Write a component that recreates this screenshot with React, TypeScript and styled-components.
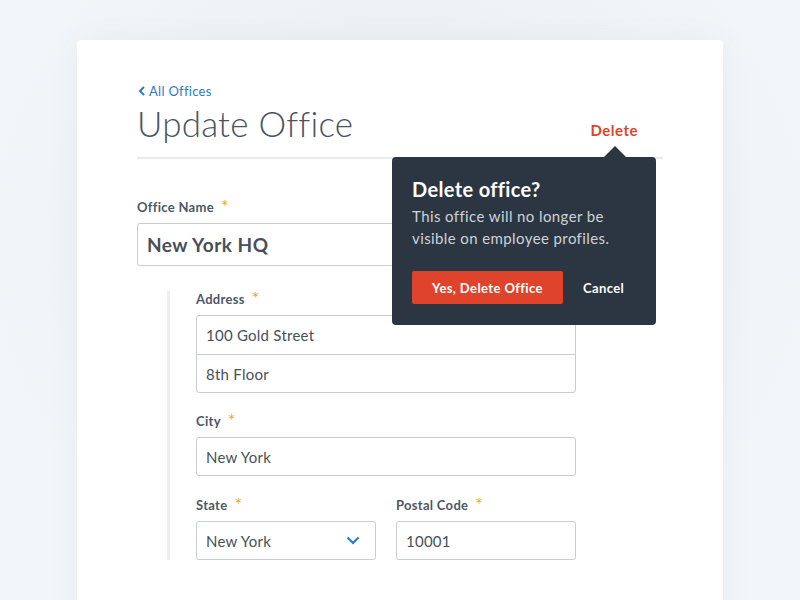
import React from 'react';
import styled, { createGlobalStyle } from 'styled-components';

const GlobalStyle = createGlobalStyle`
  html, body {
    margin: 0;
    padding: 0;
    height: 100%;
  }
  body {
    font-family: Lato, "Open Sans", sans-serif;
    background: #f2f5f8;
    overflow: hidden;
  }
`;

const Page = styled.div`
  width: 800px;
  height: 600px;
  overflow: hidden;
  background: radial-gradient(ellipse at 50% 40%, #e8ecf0 0%, #eef1f5 45%, #f3f6f9 75%);
  padding-top: 40px;
  box-sizing: border-box;
`;

const Card = styled.div`
  width: 646px;
  margin-left: 77px;
  height: 600px;
  background: #fff;
  border-radius: 4px;
  box-shadow: 0 0 30px rgba(60, 80, 100, 0.06);
  padding: 43px 60px 0;
  box-sizing: border-box;
`;

const Header = styled.div`
  position: relative;
  border-bottom: 2px solid #e8eaed;
  padding-bottom: 13px;
`;

const BackLink = styled.a`
  display: flex;
  align-items: center;
  gap: 3px;
  color: #2b7bc6;
  font-size: 13px;
  line-height: 16px;
  letter-spacing: 0.3px;
  text-decoration: none;
  margin-left: 1px;
`;

const TitleRow = styled.div`
  display: flex;
  align-items: flex-end;
  justify-content: space-between;
`;

const Title = styled.h1`
  margin: 3px 0 0;
  font-size: 35px;
  font-weight: 300;
  line-height: 42px;
  color: #4a5461;
  letter-spacing: 0.2px;
`;

const DeleteLink = styled.span`
  color: #e0432b;
  font-size: 15px;
  font-weight: 700;
  letter-spacing: 0.5px;
  margin-right: 25px;
  margin-bottom: 5px;
`;

const Popover = styled.div`
  position: absolute;
  left: 255px;
  top: 74px;
  width: 264px;
  box-sizing: border-box;
  background: #2c3643;
  border-radius: 4px;
  padding: 19px 20px 21px;
  color: #fff;
  z-index: 2;

  &::before {
    content: '';
    position: absolute;
    top: -11px;
    right: 30px;
    border-left: 11px solid transparent;
    border-right: 11px solid transparent;
    border-bottom: 11px solid #2c3643;
  }
`;

const PopTitle = styled.div`
  font-size: 20px;
  font-weight: 700;
  line-height: 26px;
  letter-spacing: 0.35px;
`;

const PopBody = styled.div`
  margin-top: 3px;
  font-size: 15px;
  line-height: 22px;
  letter-spacing: 0.4px;
  color: #cdd2d8;
`;

const PopActions = styled.div`
  display: flex;
  align-items: center;
  gap: 20px;
  margin-top: 22px;
`;

const DangerButton = styled.button`
  height: 33px;
  width: 151px;
  border: none;
  border-radius: 2px;
  background: #e0432b;
  color: #fff;
  font-family: inherit;
  font-size: 13px;
  font-weight: 700;
  letter-spacing: 0.4px;
`;

const TextButton = styled.button`
  border: none;
  background: none;
  color: #fff;
  font-family: inherit;
  font-size: 13px;
  font-weight: 700;
  letter-spacing: 0.4px;
  padding: 0;
`;

const Form = styled.div`
  width: 439px;
  padding-top: 40px;
`;

const Field = styled.div<{ $gap?: number }>`
  display: flex;
  flex-direction: column;
  margin-top: ${(p) => p.$gap ?? 0}px;
  flex: 1;
`;

const Label = styled.label`
  display: flex;
  align-items: flex-start;
  font-size: 13px;
  font-weight: 700;
  line-height: 16px;
  letter-spacing: 0.3px;
  color: #4d5765;
  margin-bottom: 8px;
`;

const Star = styled.span`
  color: #f5a623;
  font-size: 18px;
  font-weight: 400;
  line-height: 14px;
  margin-left: 7px;
`;

const Input = styled.div<{ $big?: boolean }>`
  display: flex;
  align-items: center;
  justify-content: space-between;
  height: ${(p) => (p.$big ? 43 : 39)}px;
  box-sizing: border-box;
  border: 1px solid #c9cdd1;
  border-radius: 3px;
  padding: 0 9px;
  font-size: ${(p) => (p.$big ? 19 : 15)}px;
  font-weight: ${(p) => (p.$big ? 700 : 400)};
  letter-spacing: ${(p) => (p.$big ? 0.5 : 0.25)}px;
  color: #474f5a;
`;

const InputStack = styled.div`
  border: 1px solid #c9cdd1;
  border-radius: 3px;
  display: flex;
  flex-direction: column;
`;

const StackRow = styled.div`
  height: 38px;
  display: flex;
  align-items: center;
  padding: 0 9px;
  font-size: 15px;
  letter-spacing: 0.25px;
  color: #474f5a;
  & + & {
    height: 37px;
    border-top: 1px solid #c9cdd1;
  }
`;

const Nested = styled.div`
  margin: 25px 0 0 30px;
  border-left: 3px solid #eceef0;
  padding-left: 26px;
`;

const Row = styled.div`
  display: flex;
  gap: 20px;
  margin-top: 21px;
`;

const Chevron = () => (
  <svg width="8" height="10" viewBox="0 0 8 10">
    <path d="M6 1 L2 5 L6 9" fill="none" stroke="#2b7bc6" strokeWidth="2" />
  </svg>
);

const Caret = () => (
  <svg width="14" height="9" viewBox="0 0 14 9" style={{ marginRight: 6 }}>
    <path d="M1.5 1.5 L7 7 L12.5 1.5" fill="none" stroke="#2b7bc6" strokeWidth="2.2" />
  </svg>
);

export default function App() {
  return (
    <>
      <GlobalStyle />
      <Page>
        <Card>
          <Header>
            <BackLink>
              <Chevron />
              All Offices
            </BackLink>
            <TitleRow>
              <Title>Update Office</Title>
              <DeleteLink>Delete</DeleteLink>
            </TitleRow>
            <Popover>
              <PopTitle>Delete office?</PopTitle>
              <PopBody>
                This office will no longer be
                <br />
                visible on employee profiles.
              </PopBody>
              <PopActions>
                <DangerButton>Yes, Delete Office</DangerButton>
                <TextButton>Cancel</TextButton>
              </PopActions>
            </Popover>
          </Header>
          <Form>
            <Field>
              <Label>
                Office Name<Star>*</Star>
              </Label>
              <Input $big>New York HQ</Input>
            </Field>
            <Nested>
              <Field>
                <Label>
                  Address<Star>*</Star>
                </Label>
                <InputStack>
                  <StackRow>100 Gold Street</StackRow>
                  <StackRow>8th Floor</StackRow>
                </InputStack>
              </Field>
              <Field $gap={20}>
                <Label>
                  City<Star>*</Star>
                </Label>
                <Input>New York</Input>
              </Field>
              <Row>
                <Field>
                  <Label>
                    State<Star>*</Star>
                  </Label>
                  <Input>
                    New York
                    <Caret />
                  </Input>
                </Field>
                <Field>
                  <Label>
                    Postal Code<Star>*</Star>
                  </Label>
                  <Input>10001</Input>
                </Field>
              </Row>
            </Nested>
          </Form>
        </Card>
      </Page>
    </>
  );
}
